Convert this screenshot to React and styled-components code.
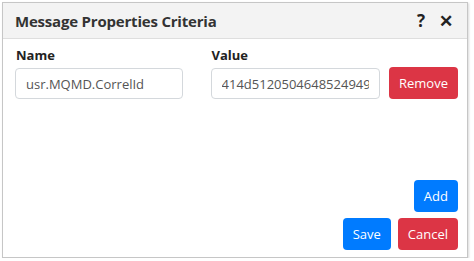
import React from "react";
import styled, { createGlobalStyle } from "styled-components";

const Global = createGlobalStyle`
  html, body { margin: 0; padding: 0; background: #fff; }
  body { font-family: "Open Sans", "Noto Sans", sans-serif; }
  * { box-sizing: border-box; }
`;

const Dialog = styled.div`
  margin: 2px 0 0 2px;
  width: 466px;
  height: 256px;
  border: 1px solid #c6c6c6;
  box-shadow: 1px 1px 2px rgba(0,0,0,0.15);
  display: flex;
  flex-direction: column;
  background: #fff;
`;

const Header = styled.div`
  height: 36px;
  background: #f3f3f3;
  border-bottom: 1px solid #dedede;
  display: flex;
  align-items: center;
  padding: 0 14px 0 12px;
`;

const Title = styled.div`
  flex: 1;
  font-size: 15px;
  font-weight: 700;
  color: #333;
  letter-spacing: -0.2px;
`;

const HeaderIcon = styled.span`
  font-size: 17px;
  font-weight: 700;
  color: #222;
  margin-left: ${(p) => p.$gap || 0}px;
  line-height: 1;
`;

const Body = styled.div`
  flex: 1;
  display: flex;
  flex-direction: column;
  padding: 7px 9px 0 12px;
`;

const Row = styled.div`
  display: flex;
  align-items: flex-end;
`;

const Field = styled.div`
  display: flex;
  flex-direction: column;
  width: ${(p) => p.$w}px;
  margin-right: ${(p) => p.$mr || 0}px;
`;

const Label = styled.label`
  font-size: 13px;
  font-weight: 700;
  color: #222;
  height: 22px;
  line-height: 18px;
  padding-left: 1px;
`;

const Input = styled.input`
  height: 31px;
  border: 1px solid #d4d8dc;
  border-radius: 4px;
  padding: 0 10px;
  font-family: inherit;
  font-size: 13px;
  color: #555;
  width: 100%;
  outline: none;
`;

const Button = styled.button`
  height: 32px;
  padding: 0 ${(p) => p.$px || 10}px;
  border: none;
  border-radius: 4px;
  background: ${(p) => (p.$variant === "danger" ? "#dc3545" : "#007bff")};
  color: #fff;
  font-family: inherit;
  font-size: 13px;
  cursor: pointer;
`;

const Spacer = styled.div`
  flex: 1;
`;

const AddRow = styled.div`
  display: flex;
  justify-content: flex-end;
  margin-bottom: 6px;
`;

const Footer = styled.div`
  display: flex;
  justify-content: flex-end;
  gap: 7px;
  padding-bottom: 7px;
`;

export default function App() {
  return (
    <>
      <Global />
      <Dialog>
        <Header>
          <Title>Message Properties Criteria</Title>
          <HeaderIcon>?</HeaderIcon>
          <HeaderIcon $gap={14}>✕</HeaderIcon>
        </Header>
        <Body>
          <Row>
            <Field $w={168} $mr={28}>
              <Label>Name</Label>
              <Input defaultValue="usr.MQMD.CorrelId" />
            </Field>
            <Field $w={170} $mr={9}>
              <Label>Value</Label>
              <Input defaultValue="414d5120504648524949544543484e4f" />
            </Field>
            <Button $variant="danger">Remove</Button>
          </Row>
          <Spacer />
          <AddRow>
            <Button>Add</Button>
          </AddRow>
          <Footer>
            <Button>Save</Button>
            <Button $variant="danger">Cancel</Button>
          </Footer>
        </Body>
      </Dialog>
    </>
  );
}
